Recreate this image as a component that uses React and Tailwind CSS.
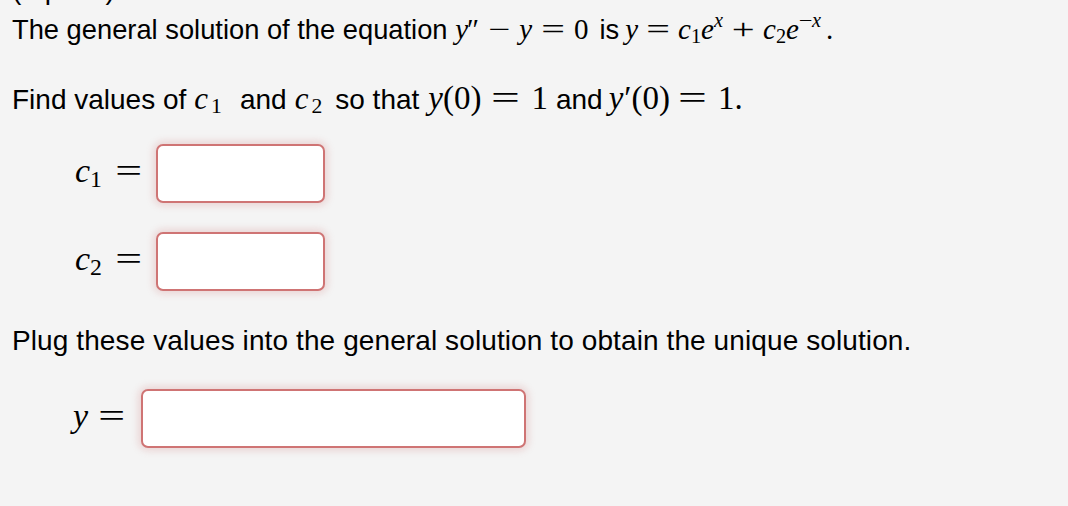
const serif = { fontFamily: '"Liberation Serif", "Times New Roman", serif' };
const sans = { fontFamily: '"Liberation Sans", Arial, Helvetica, sans-serif' };

function I({ children, className = '' }) {
  return <i className={className}>{children}</i>;
}
function Sub({ children, className = '' }) {
  return <span className={`text-[0.7em] leading-[0] align-[-0.2em] not-italic ${className}`}>{children}</span>;
}
function Sup({ children, className = '' }) {
  return <span className={`text-[0.7em] leading-[0] align-[0.57em] ${className}`}>{children}</span>;
}
function Op({ children, w, className = '', sc = 'scale-x-[1.45]' }) {
  return (
    <span className={`inline-block text-center ${w} ${className}`}>
      <span className={`inline-block ${sc}`}>{children}</span>
    </span>
  );
}
function Box({ w }) {
  return (
    <div
      className={`${w} h-[59px] shrink-0 bg-white border-2 border-[#cf7474] rounded-[7px] shadow-[0_0_7px_3px_rgba(205,110,110,0.22)]`}
    />
  );
}

export default function App() {
  return (
    <div className="w-[1068px] h-[506px] bg-[#f4f4f4] overflow-hidden text-black flex flex-col" style={sans}>
      <div className="pl-[12px] text-[28px] leading-[32px] h-[32px] -mt-[26px] whitespace-nowrap">(1 point)</div>

      {/* line 1 */}
      <div className="pl-[12px] text-[27.3px] leading-[32px] h-[32px] mt-[7px] whitespace-nowrap">
        The general solution of the equation{' '}
        <span className="text-[29px]" style={serif}>
          <I>y</I>
          <span className="-ml-[1px]">″</span>
          <Op w="w-[40px]" sc="scale-x-[1.35]">−</Op>
          <I>y</I>
          <Op w="w-[42px]">=</Op>
          0
        </span>
        <span className="ml-[11px] mr-[6px]">is</span>
        <span className="text-[29px]" style={serif}>
          <I>y</I>
          <Op w="w-[40px]">=</Op>
          <I>c</I>
          <Sub>1</Sub>
          <I>e</I>
          <Sup>
            <I>x</I>
          </Sup>
          <Op w="w-[40px]" sc="scale-x-[1.4]">+</Op>
          <I>c</I>
          <Sub>2</Sub>
          <I>e</I>
          <Sup>
            <Op w="w-[12px]" className="ml-[1px]" sc="scale-x-[1.2]">−</Op>
            <I>x</I>
          </Sup>
          <span className="ml-[5px]">.</span>
        </span>
      </div>

      {/* line 2 */}
      <div className="pl-[12px] text-[28px] leading-[32px] h-[32px] mt-[37px] whitespace-nowrap">
        Find values of
        <span className="text-[31px] ml-[8px]" style={serif}>
          <I>c</I>
          <Sub className="ml-[3px]">1</Sub>
        </span>
        <span className="ml-[18px]">and</span>
        <span className="text-[31px] ml-[8px]" style={serif}>
          <I>c</I>
          <Sub className="ml-[3px]">2</Sub>
        </span>
        <span className="ml-[13px]">so that</span>
        <span className="text-[33px] ml-[9px]" style={serif}>
          <I>y</I>(0)
          <Op w="w-[44px]" className="ml-[2px]" sc="scale-x-[1.55]">=</Op>
          <span className="ml-[4px]">1</span>
        </span>
        <span className="ml-[8px]">and</span>
        <span className="text-[33px] ml-[6px]" style={serif}>
          <I>y</I>
          <span className="ml-[1px]">′</span>
          (0)
          <Op w="w-[44px]" sc="scale-x-[1.55]">=</Op>
          <span className="ml-[4px]">1.</span>
        </span>
      </div>

      {/* c1 */}
      <div className="flex items-center h-[59px] mt-[30px] pl-[75px]">
        <span className="text-[34px] leading-none mb-[6px] whitespace-nowrap" style={serif}>
          <I>c</I>
          <Sub>1</Sub>
          <Op w="w-[40px]" className="ml-[7px]" sc="scale-x-[1.4]">=</Op>
        </span>
        <div className="ml-[7px]">
          <Box w="w-[169px]" />
        </div>
      </div>

      {/* c2 */}
      <div className="flex items-center h-[59px] mt-[29px] pl-[75px]">
        <span className="text-[34px] leading-none mb-[6px] whitespace-nowrap" style={serif}>
          <I>c</I>
          <Sub>2</Sub>
          <Op w="w-[40px]" className="ml-[7px]" sc="scale-x-[1.4]">=</Op>
        </span>
        <div className="ml-[7px]">
          <Box w="w-[169px]" />
        </div>
      </div>

      {/* Plug line */}
      <div className="pl-[12px] text-[28px] leading-[32px] h-[32px] mt-[34px] whitespace-nowrap tracking-[0.1px]">
        Plug these values into the general solution to obtain the unique solution.
      </div>

      {/* y */}
      <div className="flex items-center h-[59px] mt-[32px] pl-[73px]">
        <span className="text-[34px] leading-none mb-[6px] whitespace-nowrap" style={serif}>
          <I>y</I>
          <Op w="w-[40px]" className="ml-[3px]" sc="scale-x-[1.4]">=</Op>
        </span>
        <div className="ml-[10px]">
          <Box w="w-[385px]" />
        </div>
      </div>
    </div>
  );
}
